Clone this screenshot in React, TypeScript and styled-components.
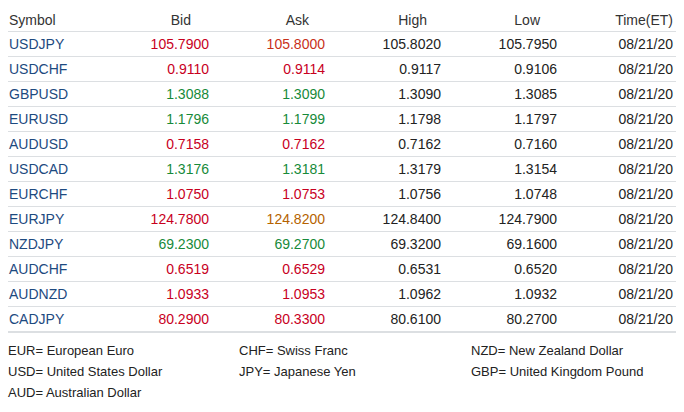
import React from "react";
import styled, { createGlobalStyle } from "styled-components";

const G = createGlobalStyle`
  body { margin: 0; background: #fff; font-family: "Liberation Sans", Arial, sans-serif; }
`;
const Wrap = styled.div`padding: 8px 8px 0 8px; width: 668px;`;
const Row = styled.div<{ head?: boolean; last?: boolean }>`
  display: grid;
  grid-template-columns: 88px repeat(5, 116px);
  height: ${(p) => (p.head ? 23 : 24)}px;
  align-items: center;
  border-bottom: ${(p) => (p.last ? "2px" : "1px")} solid #dcdfe2;
  font-size: 14px;
  color: ${(p) => (p.head ? "#333" : "#222")};
`;
const Cell = styled.div<{ c?: string; left?: boolean; pr?: number }>`
  text-align: ${(p) => (p.left ? "left" : "right")};
  padding: 0 ${(p) => (p.left ? 0 : p.pr ?? 3)}px 0 ${(p) => (p.left ? 1 : 0)}px;
  color: ${(p) => p.c || "inherit"};
`;
const Legend = styled.div`
  display: grid;
  grid-template-columns: 231px 232px 205px;
  padding-top: 7px;
  font-size: 13px;
  line-height: 21px;
  color: #222;
`;
const R = "#c8001e", O = "#c8301a", O2 = "#b56200", GR = "#178a3a", B = "#1d4a80";
const data: [string, string, string, string, string, string, string][] = [
  ["USDJPY", "105.7900", R, "105.8000", O, "105.8020", "105.7950"],
  ["USDCHF", "0.9110", R, "0.9114", R, "0.9117", "0.9106"],
  ["GBPUSD", "1.3088", GR, "1.3090", GR, "1.3090", "1.3085"],
  ["EURUSD", "1.1796", GR, "1.1799", GR, "1.1798", "1.1797"],
  ["AUDUSD", "0.7158", R, "0.7162", R, "0.7162", "0.7160"],
  ["USDCAD", "1.3176", GR, "1.3181", GR, "1.3179", "1.3154"],
  ["EURCHF", "1.0750", R, "1.0753", R, "1.0756", "1.0748"],
  ["EURJPY", "124.7800", R, "124.8200", O2, "124.8400", "124.7900"],
  ["NZDJPY", "69.2300", GR, "69.2700", GR, "69.3200", "69.1600"],
  ["AUDCHF", "0.6519", R, "0.6529", R, "0.6531", "0.6520"],
  ["AUDNZD", "1.0933", R, "1.0953", R, "1.0962", "1.0932"],
  ["CADJPY", "80.2900", R, "80.3300", R, "80.6100", "80.2700"],
];
export default function App() {
  return (
    <Wrap>
      <G />
      <Row head>
        <Cell left>Symbol</Cell><Cell pr={21}>Bid</Cell><Cell pr={19}>Ask</Cell><Cell pr={17}>High</Cell><Cell pr={20}>Low</Cell><Cell>Time(ET)</Cell>
      </Row>
      {data.map((d, i) => (
        <Row key={d[0]} last={i === data.length - 1}>
          <Cell left c={B}>{d[0]}</Cell>
          <Cell c={d[2]}>{d[1]}</Cell>
          <Cell c={d[4]}>{d[3]}</Cell>
          <Cell>{d[5]}</Cell>
          <Cell>{d[6]}</Cell>
          <Cell>08/21/20</Cell>
        </Row>
      ))}
      <Legend>
        <div>EUR= European Euro</div><div>CHF= Swiss Franc</div><div>NZD= New Zealand Dollar</div>
        <div>USD= United States Dollar</div><div>JPY= Japanese Yen</div><div>GBP= United Kingdom Pound</div>
        <div>AUD= Australian Dollar</div>
      </Legend>
    </Wrap>
  );
}
